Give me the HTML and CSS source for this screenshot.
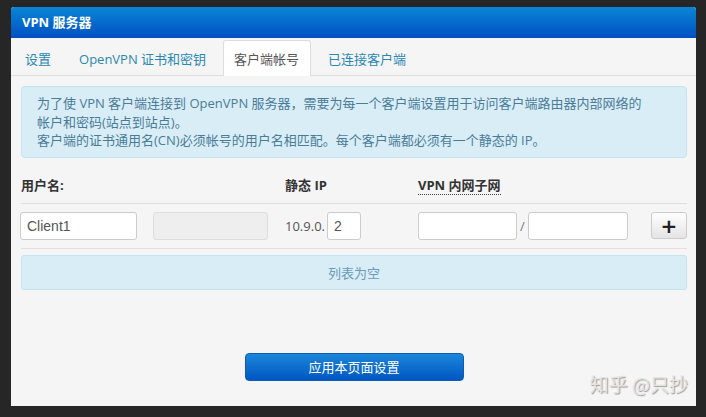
FILE: index.html
```html
<!DOCTYPE html>
<html lang="zh-CN">
<head>
  <meta charset="UTF-8" />
  <meta name="viewport" content="width=device-width, initial-scale=1.0">
  <title>VPN 服务器</title>
  <link rel="stylesheet" href="styles.css">
</head>
<body>

<!-- Panel -->
<div class="panel">
  <div class="panel-head">VPN 服务器</div>

  <!-- Tabs -->
  <nav class="tabs">
    <a href="#" class="tab">设置</a>
    <a href="#" class="tab">OpenVPN 证书和密钥</a>
    <a href="#" class="tab active">客户端帐号</a>
    <a href="#" class="tab">已连接客户端</a>
  </nav>

  <div class="panel-body">
    <div class="info-box">
      为了使 VPN 客户端连接到 OpenVPN 服务器，需要为每一个客户端设置用于访问客户端路由器内部网络的<br>
      帐户和密码(站点到站点)。<br>
      客户端的证书通用名(CN)必须帐号的用户名相匹配。每个客户端都必须有一个静态的 IP。
    </div>

    <!-- Client table -->
    <div class="client-row head-row">
      <div>用户名:</div>
      <div></div>
      <div>静态 IP</div>
      <div><span class="dotted">VPN 内网子网</span></div>
      <div></div>
    </div>
    <div class="client-row input-row">
      <div><input type="text" class="field user-field" value="Client1"></div>
      <div><input type="text" class="field pass-field" disabled></div>
      <div class="ip-cell">10.9.0. <input type="text" class="field ip-field" value="2"></div>
      <div class="subnet-cell">
        <input type="text" class="field net-field">
        <span class="slash">/</span>
        <input type="text" class="field mask-field">
      </div>
      <div><button class="add-btn">+</button></div>
    </div>

    <div class="empty-box">列表为空</div>

    <div class="actions">
      <button class="apply-btn">应用本页面设置</button>
    </div>
  </div>

  <div class="watermark">知乎 @只抄</div>
</div>

</body>
</html>
```

FILE: styles.css
```css
body {
  margin: 0;
  background-color: #262626;
  font-family: "Open Sans", "Noto Sans CJK SC", sans-serif;
  font-size: 13px;
  color: #333;
}

.panel {
  position: relative;
  margin: 7px 0 0 11px;
  width: 685px;
  height: 399px;
  background: #f5f5f5;
  border-radius: 3px 3px 0 0;
  overflow: hidden;
}

.panel-head {
  height: 31px;
  line-height: 31px;
  padding-left: 11px;
  background: linear-gradient(to bottom, #0a86d6, #0050c2);
  color: #fff;
  font-weight: bold;
  font-size: 13px;
}

/* Tabs */
.tabs {
  display: flex;
  gap: 6px;
  padding: 2px 0 0 3px;
  height: 35px;
  border-bottom: 1px solid #ddd;
}

.tab {
  display: flex;
  align-items: center;
  padding: 0 10px;
  height: 35px;
  color: #2a88b2;
  text-decoration: none;
  border: 1px solid transparent;
  border-bottom: none;
  border-radius: 3px 3px 0 0;
  box-sizing: border-box;
}

.tab.active {
  background: #fff;
  border-color: #ddd;
  color: #555;
  height: 36px;
  padding: 0 11px 0 10px;
}

.panel-body {
  padding: 10px 9px 0 10px;
}

.info-box {
  padding: 7px 15px;
  line-height: 18.5px;
  background: #d9edf7;
  border: 1px solid #c4e3f0;
  border-radius: 4px;
  color: #4a7c98;
  white-space: nowrap;
}

/* Client table */
.client-row {
  display: grid;
  grid-template-columns: 132px 132px 133px 233px 1fr;
  align-items: center;
}

.head-row {
  padding: 18px 0 9px;
  line-height: 18px;
  font-weight: bold;
  border-bottom: 1px solid #ddd;
}

.dotted {
  border-bottom: 1px dotted #444;
}

.input-row {
  padding: 8px 0;
  border-bottom: 1px solid #eadcdc;
}

.field {
  height: 28px;
  box-sizing: border-box;
  border: 1px solid #ccc;
  border-radius: 3px;
  background: #fff;
  padding: 0 6px;
  font-family: "Liberation Sans", sans-serif;
  font-size: 14px;
  color: #555;
  margin: 0;
}

.user-field { width: 117px; margin-left: -1px; }
.pass-field { width: 115px; background: #eee; border-color: #ddd; }
.ip-field { width: 34px; }
.net-field { width: 99px; }
.mask-field { width: 100px; }

.ip-cell,
.subnet-cell {
  display: flex;
  align-items: center;
  color: #555;
  white-space: nowrap;
}

.ip-cell .field {
  margin-left: 2px;
}

.slash {
  margin: 0 3px;
  color: #777;
}

.add-btn {
  width: 36px;
  height: 27px;
  border: 1px solid #ccc;
  border-radius: 3px;
  background: linear-gradient(to bottom, #fff, #e4e4e4);
  font-size: 20px;
  font-weight: bold;
  line-height: 1;
  color: #222;
  padding: 0;
  font-family: "DejaVu Sans", sans-serif;
}

.empty-box {
  margin-top: 6px;
  height: 35px;
  box-sizing: border-box;
  display: flex;
  align-items: center;
  justify-content: center;
  background: #d9edf7;
  border: 1px solid #c4e3f0;
  border-radius: 3px;
  color: #6b9cb8;
}

.actions {
  display: flex;
  justify-content: center;
  margin-top: 63px;
}

.apply-btn {
  width: 219px;
  height: 28px;
  border: 1px solid #0b5db4;
  border-radius: 4px;
  background: linear-gradient(to bottom, #1c86da, #0057c2);
  color: #fff;
  font-family: inherit;
  font-size: 13px;
  cursor: pointer;
}

.watermark {
  position: absolute;
  right: 8px;
  bottom: 9px;
  font-size: 19px;
  color: #e4e4e4;
  text-shadow: 1px 1px 1px #9a9a9a;
  font-family: "Noto Sans CJK SC", sans-serif;
}
```
